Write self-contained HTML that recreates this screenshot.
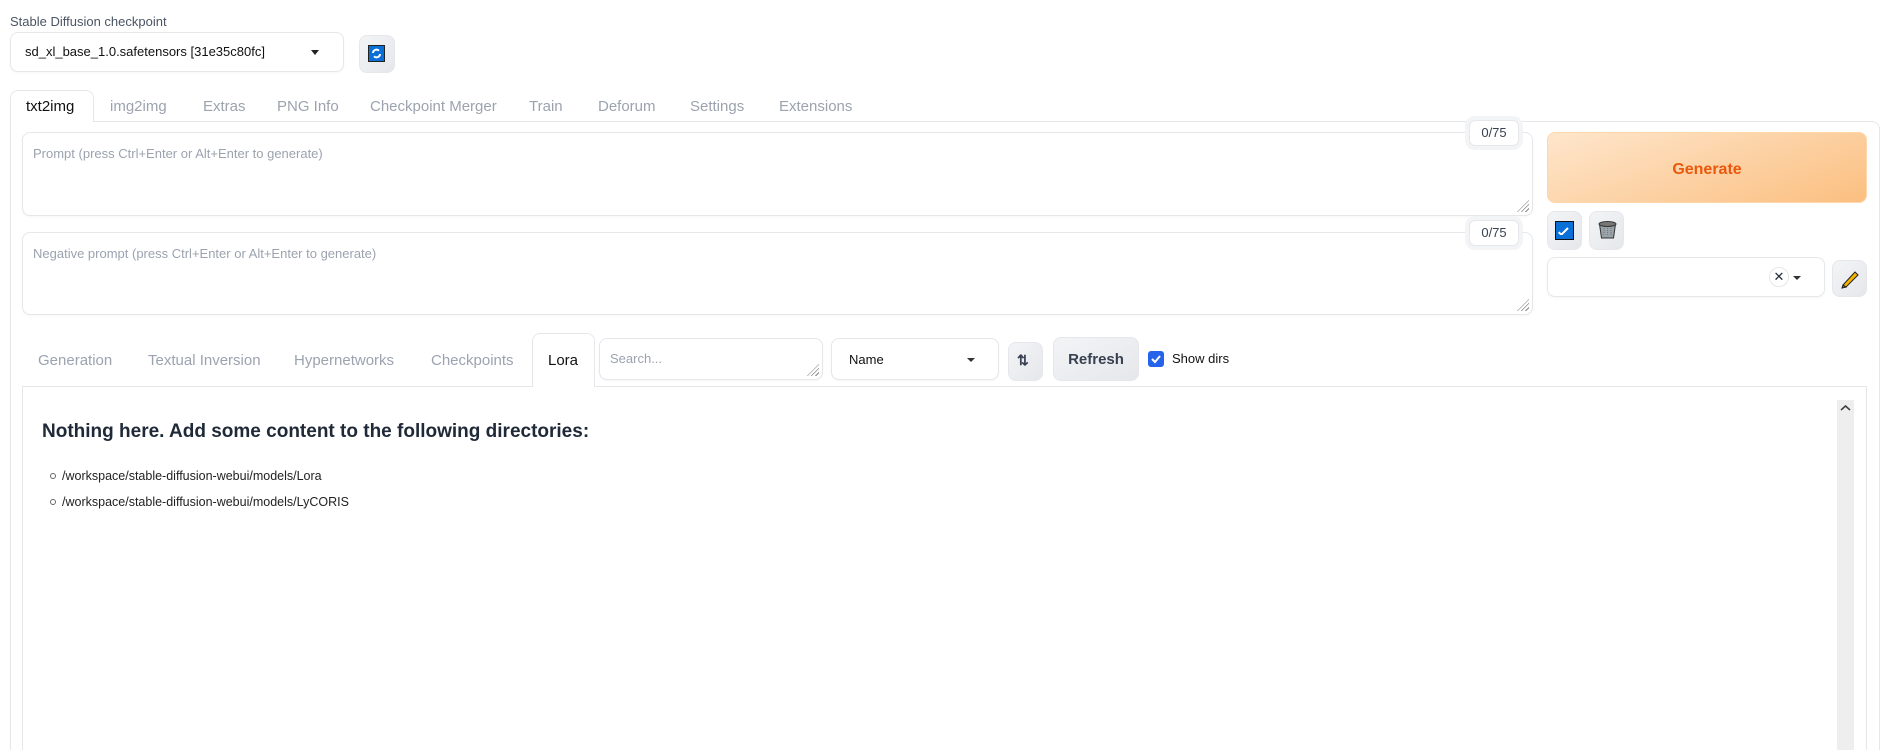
<!DOCTYPE html>
<html style="width:1882px;height:750px;overflow:hidden"><head><meta charset="utf-8"><style>
*{box-sizing:border-box;margin:0;padding:0}
body{width:1882px;height:750px;background:#fff;font-family:"Liberation Sans",sans-serif;position:relative;overflow:hidden;color:#1f2937}
.a{position:absolute}
.box{position:absolute;border:1px solid #e5e7eb;border-radius:8px;background:#fff;box-shadow:0 1px 2px rgba(0,0,0,.04)}
.btn{position:absolute;background:linear-gradient(to bottom right,#f3f4f6,#e5e7eb);border:1px solid #e5e7eb;border-radius:8px}
.tab{position:absolute;font-size:15px;color:#9ca3af;top:98px}
.st{position:absolute;font-size:15px;color:#9ca3af;top:352px}
.ph{position:absolute;font-size:13px;color:#9ca3af}
.grip{position:absolute;width:12px;height:12px;background:repeating-linear-gradient(135deg,transparent 0 2px,#888 2px 3px);clip-path:polygon(100% 0,100% 100%,0 100%)}
.cnt{position:absolute;width:50px;height:26px;border:1px solid #e5e7eb;border-radius:6px;background:#fff;box-shadow:0 0 0 4px #f3f4f6;font-size:13px;text-align:center;line-height:24px;color:#374151}
</style></head><body>
<div class="a" style="left:10px;top:14px;font-size:13px;color:#4b5563">Stable Diffusion checkpoint</div>
<div class="box" style="left:10px;top:32px;width:334px;height:40px"></div>
<div class="a" style="left:25px;top:44px;font-size:13px;color:#111">sd_xl_base_1.0.safetensors [31e35c80fc]</div>
<div class="a" style="left:311px;top:50px;width:0;height:0;border-left:4px solid transparent;border-right:4px solid transparent;border-top:5px solid #222"></div>
<div class="btn" style="left:359px;top:35px;width:36px;height:38px"></div>
<svg class="a" style="left:368px;top:45px" width="17" height="17"><rect x=".5" y=".5" width="16" height="16" fill="#0a6fd6" stroke="#222"/><path d="M5 8a3.5 3.5 0 0 1 6-2.3M12 9a3.5 3.5 0 0 1-6 2.3" stroke="#fff" stroke-width="2" fill="none"/></svg>

<div class="a" style="left:10px;top:90px;width:84px;height:32px;border:1px solid #e5e7eb;border-bottom:none;border-radius:8px 8px 0 0;background:#fff;z-index:2"></div>
<div class="tab" style="left:26px;color:#111;z-index:3">txt2img</div>
<div class="tab" style="left:110px">img2img</div>
<div class="tab" style="left:203px">Extras</div>
<div class="tab" style="left:277px">PNG Info</div>
<div class="tab" style="left:370px">Checkpoint Merger</div>
<div class="tab" style="left:529px">Train</div>
<div class="tab" style="left:598px">Deforum</div>
<div class="tab" style="left:690px">Settings</div>
<div class="tab" style="left:779px">Extensions</div>
<div class="a" style="left:10px;top:121px;width:1870px;height:660px;border:1px solid #e5e7eb;border-radius:0 8px 0 0"></div>

<div class="box" style="left:22px;top:132px;width:1511px;height:84px"></div>
<div class="ph" style="left:33px;top:146px">Prompt (press Ctrl+Enter or Alt+Enter to generate)</div>
<div class="grip" style="left:1517px;top:200px"></div>
<div class="cnt" style="left:1469px;top:120px">0/75</div>
<div class="box" style="left:22px;top:232px;width:1511px;height:83px"></div>
<div class="ph" style="left:33px;top:246px">Negative prompt (press Ctrl+Enter or Alt+Enter to generate)</div>
<div class="grip" style="left:1517px;top:299px"></div>
<div class="cnt" style="left:1469px;top:220px">0/75</div>

<div class="a" style="left:1547px;top:132px;width:320px;height:71px;border-radius:8px;background:linear-gradient(160deg,#fee6cc,#fbbf80);border:1px solid #fed7aa"></div>
<div class="a" style="left:1547px;top:161px;width:320px;text-align:center;font-size:16px;font-weight:bold;color:#ea580c">Generate</div>
<div class="btn" style="left:1547px;top:211px;width:35px;height:39px"></div>
<svg class="a" style="left:1555px;top:221px" width="19" height="19"><rect x=".5" y=".5" width="18" height="18" fill="#0a6fd6" stroke="#111"/><path d="M5 13l2 0 6-6M5 13l-1-2" stroke="#fff" stroke-width="2" fill="none"/></svg>
<div class="btn" style="left:1589px;top:211px;width:35px;height:39px"></div>
<svg class="a" style="left:1598px;top:220px" width="19" height="20"><path d="M1.5 4l2 14h12l2-14" fill="#9aa3aa" stroke="#333"/><ellipse cx="9.5" cy="4" rx="8.5" ry="2.5" fill="#777" stroke="#333"/><path d="M6 8v8M9.5 8v8M13 8v8" stroke="#777" stroke-dasharray="1 1"/></svg>
<div class="box" style="left:1547px;top:257px;width:278px;height:40px"></div>
<div class="a" style="left:1769px;top:267px;width:20px;height:20px;border:1px solid #e5e7eb;border-radius:50%;text-align:center;font-size:13px;line-height:18px">✕</div>
<div class="a" style="left:1793px;top:276px;border-left:4px solid transparent;border-right:4px solid transparent;border-top:4px solid #333"></div>
<div class="btn" style="left:1832px;top:260px;width:35px;height:37px"></div>
<svg class="a" style="left:1839px;top:268px" width="22" height="22"><path d="M4 17L16 4l3 3L7 19z" fill="#f5b400" stroke="#222"/><path d="M4 17l3 2-4 1z" fill="#b5541a" stroke="#222"/></svg>

<div class="st" style="left:38px">Generation</div>
<div class="st" style="left:148px">Textual Inversion</div>
<div class="st" style="left:294px">Hypernetworks</div>
<div class="st" style="left:431px">Checkpoints</div>
<div class="a" style="left:532px;top:333px;width:63px;height:54px;border:1px solid #e5e7eb;border-bottom:none;border-radius:8px 8px 0 0;background:#fff;z-index:2"></div>
<div class="st" style="left:548px;color:#111;z-index:3">Lora</div>
<div class="box" style="left:599px;top:338px;width:224px;height:42px"></div>
<div class="ph" style="left:610px;top:351px">Search...</div>
<div class="grip" style="left:807px;top:364px"></div>
<div class="box" style="left:831px;top:338px;width:168px;height:42px"></div>
<div class="a" style="left:849px;top:352px;font-size:13px;color:#111">Name</div>
<div class="a" style="left:967px;top:358px;border-left:4px solid transparent;border-right:4px solid transparent;border-top:4px solid #333"></div>
<div class="btn" style="left:1008px;top:342px;width:35px;height:39px"></div>
<div class="a" style="left:1017px;top:352px;font-size:14px;font-weight:bold;color:#374151">⇅</div>
<div class="btn" style="left:1053px;top:337px;width:86px;height:44px"></div>
<div class="a" style="left:1053px;top:351px;width:86px;text-align:center;font-size:15px;font-weight:bold;color:#374151">Refresh</div>
<div class="a" style="left:1148px;top:351px;width:16px;height:16px;border-radius:3px;background:#2563eb"></div>
<svg class="a" style="left:1148px;top:351px" width="16" height="16"><path d="M4 8l3 3 5-6" stroke="#fff" stroke-width="2" fill="none"/></svg>
<div class="a" style="left:1172px;top:351px;font-size:13px;color:#111">Show dirs</div>

<div class="a" style="left:22px;top:386px;width:1845px;height:400px;border:1px solid #e5e7eb;background:#fff"></div>
<div class="a" style="left:533px;top:386px;width:61px;height:1px;background:#fff;z-index:3"></div>
<div class="a" style="left:1837px;top:400px;width:17px;height:360px;background:#eee"></div>
<svg class="a" style="left:1840px;top:404px" width="11" height="8"><path d="M1 6l4.5-4 4.5 4" stroke="#444" stroke-width="1.6" fill="none"/></svg>
<div class="a" style="left:42px;top:421px;font-size:19px;font-weight:bold;color:#1f2937">Nothing here. Add some content to the following directories:</div>
<div class="a" style="left:50px;top:473px;width:6px;height:6px;border:1px solid #666;border-radius:50%"></div>
<div class="a" style="left:62px;top:469px;font-size:12.5px;color:#222">/workspace/stable-diffusion-webui/models/Lora</div>
<div class="a" style="left:50px;top:499px;width:6px;height:6px;border:1px solid #666;border-radius:50%"></div>
<div class="a" style="left:62px;top:495px;font-size:12.5px;color:#222">/workspace/stable-diffusion-webui/models/LyCORIS</div>
</body></html>
